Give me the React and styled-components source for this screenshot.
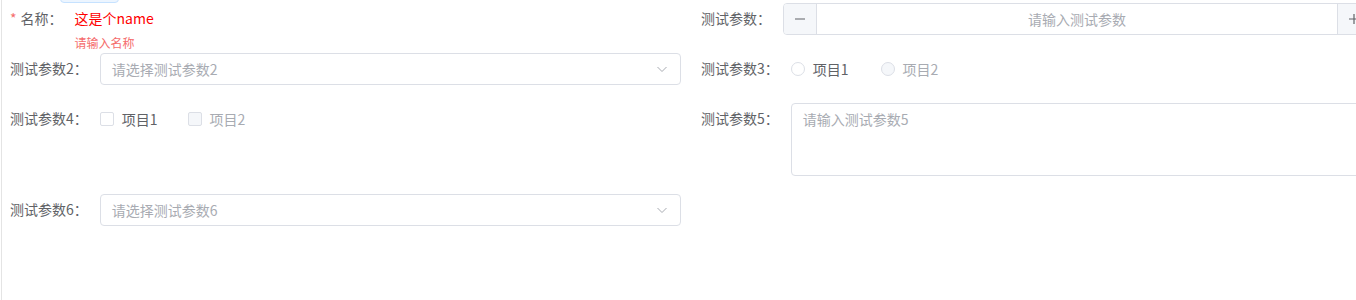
import React from "react";
import styled, { createGlobalStyle } from "styled-components";

const Global = createGlobalStyle`
  html, body {
    margin: 0;
    padding: 0;
    background: #fff;
    overflow: hidden;
  }
  body {
    font-family: "Noto Sans CJK SC", "Noto Sans", sans-serif;
    font-size: 14px;
    color: #606266;
  }
`;

const Page = styled.div`
  margin-left: 1px;
  border-left: 1px solid #e4e4e4;
  height: 340px;
  width: 1400px;
  box-sizing: border-box;
`;

const TopBar = styled.div`
  display: flex;
  padding-left: 58px;
  margin-top: -29px;
`;

const GhostButton = styled.button`
  width: 59px;
  height: 32px;
  border: 1px solid #c6e2ff;
  background: #ecf5ff;
  border-radius: 4px;
  padding: 0;
`;

const Form = styled.div`
  display: grid;
  grid-template-columns: 671px 670px;
  column-gap: 20px;
  align-items: start;
  padding-left: 8px;
`;

const Item = styled.div`
  display: flex;
  align-items: flex-start;
  margin-bottom: ${(p) => (p.$error ? "0" : "18px")};
`;

const Label = styled.label`
  flex: none;
  height: 32px;
  line-height: 31px;
  padding-right: 12px;
  color: #606266;
  font-size: 14px;
  white-space: nowrap;
`;

const Star = styled.span`
  color: #f56c6c;
  margin-right: 4px;
`;

const Content = styled.div`
  flex: 1;
  min-width: 0;
  display: flex;
  flex-direction: column;
`;

const Line = styled.div`
  display: flex;
  align-items: center;
  min-height: 32px;
`;

const ValueText = styled.span`
  color: #ff0000;
  line-height: 31px;
  height: 32px;
`;

const ErrorText = styled.div`
  color: #f56c6c;
  font-size: 12px;
  line-height: 12px;
  padding-top: 2px;
  height: 16px;
`;

const Select = styled.div`
  height: 32px;
  box-sizing: border-box;
  border: 1px solid #dcdfe6;
  border-radius: 4px;
  display: flex;
  align-items: center;
  justify-content: space-between;
  padding: 0 11px;
  color: #a8abb2;
`;

const NumberBox = styled.div`
  height: 32px;
  box-sizing: border-box;
  border: 1px solid #dcdfe6;
  border-radius: 4px;
  display: flex;
  overflow: hidden;
`;

const StepBtn = styled.span`
  flex: none;
  width: 32px;
  background: #f5f7fa;
  display: flex;
  align-items: center;
  justify-content: center;
  color: #606266;
  ${(p) => (p.$side === "left" ? "border-right: 1px solid #dcdfe6;" : "border-left: 1px solid #dcdfe6;")}
`;

const NumberField = styled.span`
  flex: 1;
  display: flex;
  align-items: center;
  justify-content: center;
  color: #a8abb2;
`;

const TextArea = styled.div`
  height: 73px;
  box-sizing: border-box;
  border: 1px solid #dcdfe6;
  border-radius: 4px;
  padding: 5px 11px;
  line-height: 21px;
  color: #a8abb2;
`;

const Option = styled.span`
  display: inline-flex;
  align-items: center;
  margin-right: ${(p) => p.$gap}px;
  color: ${(p) => (p.$disabled ? "#a8abb2" : "#606266")};
  line-height: 32px;
`;

const Radio = styled.span`
  width: 14px;
  height: 14px;
  box-sizing: border-box;
  border: 1px solid #dcdfe6;
  border-radius: 50%;
  background: ${(p) => (p.$disabled ? "#f5f7fa" : "#fff")};
  margin-right: 8px;
`;

const Check = styled.span`
  width: 14px;
  height: 14px;
  box-sizing: border-box;
  border: 1px solid #dcdfe6;
  border-radius: 2px;
  background: ${(p) => (p.$disabled ? "#f5f7fa" : "#fff")};
  margin-right: 8px;
`;

const Chevron = () => (
  <svg width="14" height="14" viewBox="0 0 14 14" fill="none">
    <polyline points="2.5,5 7,9.5 11.5,5" stroke="#a8abb2" strokeWidth="1" />
  </svg>
);

const Minus = () => (
  <svg width="12" height="12" viewBox="0 0 12 12">
    <line x1="1" y1="6" x2="11" y2="6" stroke="#606266" strokeWidth="1.2" />
  </svg>
);

const Plus = () => (
  <svg width="12" height="12" viewBox="0 0 12 12">
    <line x1="1" y1="6" x2="11" y2="6" stroke="#606266" strokeWidth="1.2" />
    <line x1="6" y1="1" x2="6" y2="11" stroke="#606266" strokeWidth="1.2" />
  </svg>
);

export default function App() {
  return (
    <>
      <Global />
      <Page>
        <TopBar>
          <GhostButton />
        </TopBar>
        <Form>
          <Item $error>
            <Label>
              <Star>*</Star>名称：
            </Label>
            <Content>
              <ValueText>这是个name</ValueText>
              <ErrorText>请输入名称</ErrorText>
            </Content>
          </Item>
          <Item>
            <Label>测试参数：</Label>
            <Content>
              <NumberBox>
                <StepBtn $side="left">
                  <Minus />
                </StepBtn>
                <NumberField>请输入测试参数</NumberField>
                <StepBtn $side="right">
                  <Plus />
                </StepBtn>
              </NumberBox>
            </Content>
          </Item>

          <Item>
            <Label>测试参数2：</Label>
            <Content>
              <Select>
                <span>请选择测试参数2</span>
                <Chevron />
              </Select>
            </Content>
          </Item>
          <Item>
            <Label>测试参数3：</Label>
            <Content>
              <Line>
                <Option $gap={32}>
                  <Radio />
                  项目1
                </Option>
                <Option $gap={32} $disabled>
                  <Radio $disabled />
                  项目2
                </Option>
              </Line>
            </Content>
          </Item>

          <Item>
            <Label>测试参数4：</Label>
            <Content>
              <Line>
                <Option $gap={30}>
                  <Check />
                  项目1
                </Option>
                <Option $gap={30} $disabled>
                  <Check $disabled />
                  项目2
                </Option>
              </Line>
            </Content>
          </Item>
          <Item>
            <Label>测试参数5：</Label>
            <Content>
              <TextArea>请输入测试参数5</TextArea>
            </Content>
          </Item>

          <Item>
            <Label>测试参数6：</Label>
            <Content>
              <Select>
                <span>请选择测试参数6</span>
                <Chevron />
              </Select>
            </Content>
          </Item>
        </Form>
      </Page>
    </>
  );
}
